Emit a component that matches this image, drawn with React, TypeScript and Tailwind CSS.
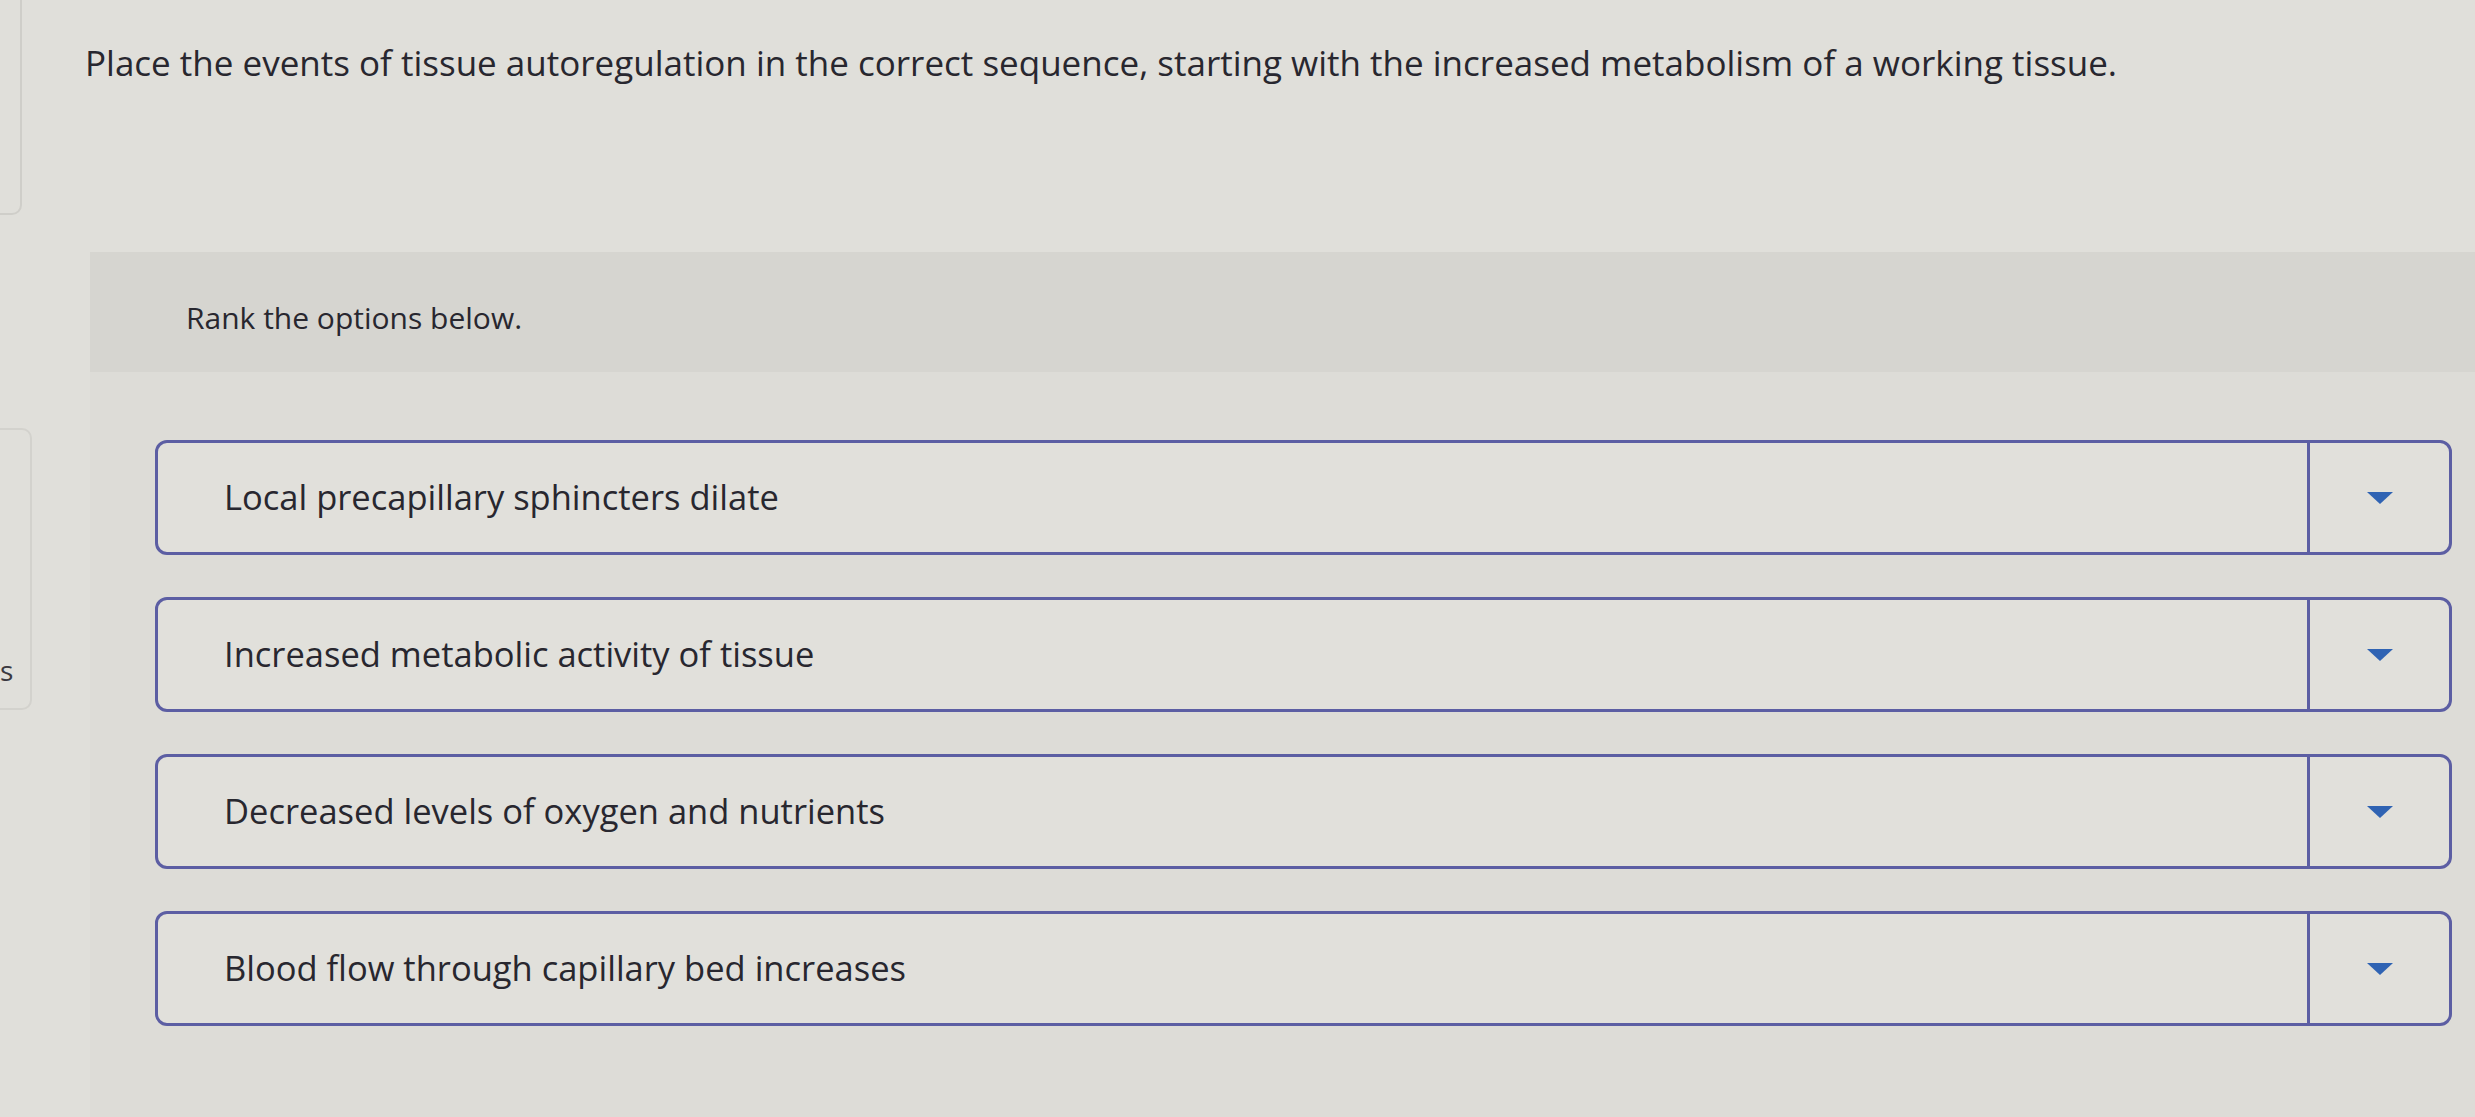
import React from "react";

const items = [
  "Local precapillary sphincters dilate",
  "Increased metabolic activity of tissue",
  "Decreased levels of oxygen and nutrients",
  "Blood flow through capillary bed increases",
];

function Row({ text }: { text: string }) {
  return (
    <div className="flex h-[115px] rounded-[12px] border-[3px] border-[#5c5ea3] bg-[#e1e0db]">
      <div className="flex flex-1 items-center pl-[66px] pb-[2px] text-[34.5px] leading-[40px] text-[#28272f]">
        {text}
      </div>
      <div className="flex w-[142px] items-center justify-center border-l-[3px] border-[#5c5ea3]">
        <svg width="28" height="14" viewBox="0 0 28 14">
          <path d="M1 1 L27 1 L14 13 Z" fill="#2f63b3" />
        </svg>
      </div>
    </div>
  );
}

export default function App() {
  return (
    <div
      className="relative h-[1117px] w-[2475px] overflow-hidden bg-[#e0dfda]"
      style={{ fontFamily: "'Open Sans', Lato, sans-serif" }}
    >
      {/* partial cards on left edge */}
      <div className="absolute left-[-30px] top-[-20px] h-[235px] w-[52px] rounded-[10px] border-[2px] border-[#cfcec9]" />
      <div className="absolute left-[-30px] top-[428px] h-[282px] w-[62px] rounded-[10px] border-[2px] border-[#d3d2cd]" />
      <div className="absolute left-[0px] top-[656px] text-[28px] leading-none text-[#3a3940]">s</div>

      <div className="flex h-full flex-col pl-[85px]">
        <div className="pt-[43px] text-[35px] leading-[40px] text-[#28272f]">
          Place the events of tissue autoregulation in the correct sequence, starting with the increased metabolism of a working tissue.
        </div>

        <div className="mt-[169px] ml-[5px] flex flex-1 flex-col bg-[#dddcd7]">
          <div className="flex h-[120px] items-center bg-[#d6d5d0] pl-[96px] pt-[11px] text-[30px] leading-[36px] text-[#28272f]">
            Rank the options below.
          </div>
          <div className="flex flex-col gap-[42px] pl-[65px] pr-[23px] pt-[68px]">
            {items.map((t) => (
              <Row key={t} text={t} />
            ))}
          </div>
        </div>
      </div>
    </div>
  );
}
